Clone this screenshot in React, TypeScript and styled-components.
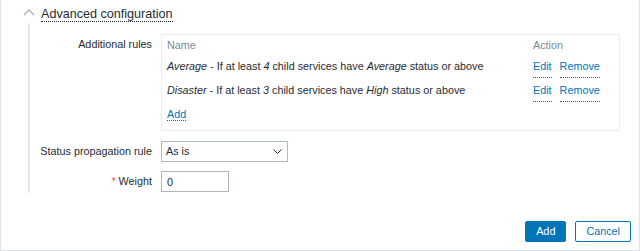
import React from "react";
import styled, { createGlobalStyle } from "styled-components";

const Global = createGlobalStyle`
  html, body { margin: 0; padding: 0; background: #ffffff; }
  body {
    font-family: "Liberation Sans", Arial, sans-serif;
    font-size: 10.8px;
    color: #1f2c33;
  }
  * { box-sizing: border-box; }
`;

const Frame = styled.div`
  width: 640px;
  height: 251px;
  border: 1px solid #dce2e5;
  border-top: none;
  display: flex;
  flex-direction: column;
  background: #ffffff;
`;

const Section = styled.section`
  padding-top: 6px;
`;

const Header = styled.div`
  display: flex;
  align-items: flex-start;
  margin-left: 22px;
  height: 17px;
`;

const Chevron = styled.svg`
  width: 12px;
  height: 7px;
  margin-top: 3px;
  flex: none;
`;

const Title = styled.span`
  margin-left: 6px;
  font-size: 12.6px;
  line-height: 17px;
`;

const TitleText = styled.span`
  border-bottom: 1px dotted #1f2c33;
`;

const Body = styled.div`
  margin-left: 27px;
  border-left: 2px solid #e3e7ea;
  padding: 11px 0 1px 0;
  display: grid;
  grid-template-columns: 122px auto;
  column-gap: 9px;
  row-gap: 9px;
  align-items: center;
  justify-items: start;
`;

const Label = styled.label<{ $top?: boolean }>`
  justify-self: end;
  align-self: ${(p) => (p.$top ? "start" : "center")};
  line-height: 21px;
  white-space: nowrap;
`;

const Required = styled.span`
  color: #e45959;
  margin-right: 3px;
`;

const RulesBox = styled.div`
  width: 459px;
  border: 1px solid #ebeef0;
  padding: 2px 5px 4px 5px;
  margin-bottom: 1px;
  display: grid;
  grid-template-columns: 1fr 81px;
`;

const HeadCell = styled.div`
  color: #768d99;
  line-height: 17px;
  height: 17px;
`;

const Cell = styled.div`
  line-height: 24px;
  height: 24px;
  white-space: nowrap;
`;

const Actions = styled(Cell)`
  display: flex;
  gap: 8px;
`;

const Link = styled.a`
  color: #0275b8;
  text-decoration: none;
  border-bottom: 1px dotted #0275b8;
  cursor: pointer;
`;

const Select = styled.div`
  width: 127px;
  height: 21px;
  border: 1px solid #acbbc2;
  padding: 0 5px 0 4px;
  display: flex;
  align-items: center;
  justify-content: space-between;
  line-height: 19px;
  background: #ffffff;
`;

const SelectArrow = styled.svg`
  width: 9px;
  height: 5px;
`;

const Input = styled.input`
  width: 68px;
  height: 21px;
  border: 1px solid #acbbc2;
  padding: 0 5px;
  font-family: "Liberation Sans", Arial, sans-serif;
  font-size: 10.8px;
  color: #1f2c33;
  outline: none;
  background: #ffffff;
`;

const Footer = styled.div`
  margin-top: auto;
  display: flex;
  justify-content: flex-end;
  gap: 9px;
  padding: 0 8px 8px 0;
`;

const Button = styled.button<{ $primary?: boolean }>`
  height: 21px;
  padding: 0 10px;
  border: 1px solid #0275b8;
  background: ${(p) => (p.$primary ? "#0275b8" : "#ffffff")};
  color: ${(p) => (p.$primary ? "#ffffff" : "#0275b8")};
  font-family: "Liberation Sans", Arial, sans-serif;
  font-size: 10.8px;
  line-height: 19px;
  border-radius: 2px;
  cursor: pointer;
`;

export default function App() {
  return (
    <>
      <Global />
      <Frame>
        <Section>
          <Header>
            <Chevron viewBox="0 0 12 7">
              <polyline points="1,6 6,1 11,6" fill="none" stroke="#aab4ba" strokeWidth="1.4" />
            </Chevron>
            <Title>
              <TitleText>Advanced configuration</TitleText>
            </Title>
          </Header>
          <Body>
            <Label $top>Additional rules</Label>
            <RulesBox>
              <HeadCell>Name</HeadCell>
              <HeadCell>Action</HeadCell>
              <Cell>
                <em>Average</em> - If at least <em>4</em> child services have <em>Average</em> status or above
              </Cell>
              <Actions>
                <Link>Edit</Link>
                <Link>Remove</Link>
              </Actions>
              <Cell>
                <em>Disaster</em> - If at least <em>3</em> child services have <em>High</em> status or above
              </Cell>
              <Actions>
                <Link>Edit</Link>
                <Link>Remove</Link>
              </Actions>
              <Cell>
                <Link>Add</Link>
              </Cell>
              <Cell />
            </RulesBox>
            <Label>Status propagation rule</Label>
            <Select>
              <span>As is</span>
              <SelectArrow viewBox="0 0 9 5">
                <polyline points="0.5,0.5 4.5,4.5 8.5,0.5" fill="none" stroke="#1f2c33" strokeWidth="1" />
              </SelectArrow>
            </Select>
            <Label>
              <Required>*</Required>Weight
            </Label>
            <Input defaultValue="0" />
          </Body>
        </Section>
        <Footer>
          <Button $primary>Add</Button>
          <Button>Cancel</Button>
        </Footer>
      </Frame>
    </>
  );
}
